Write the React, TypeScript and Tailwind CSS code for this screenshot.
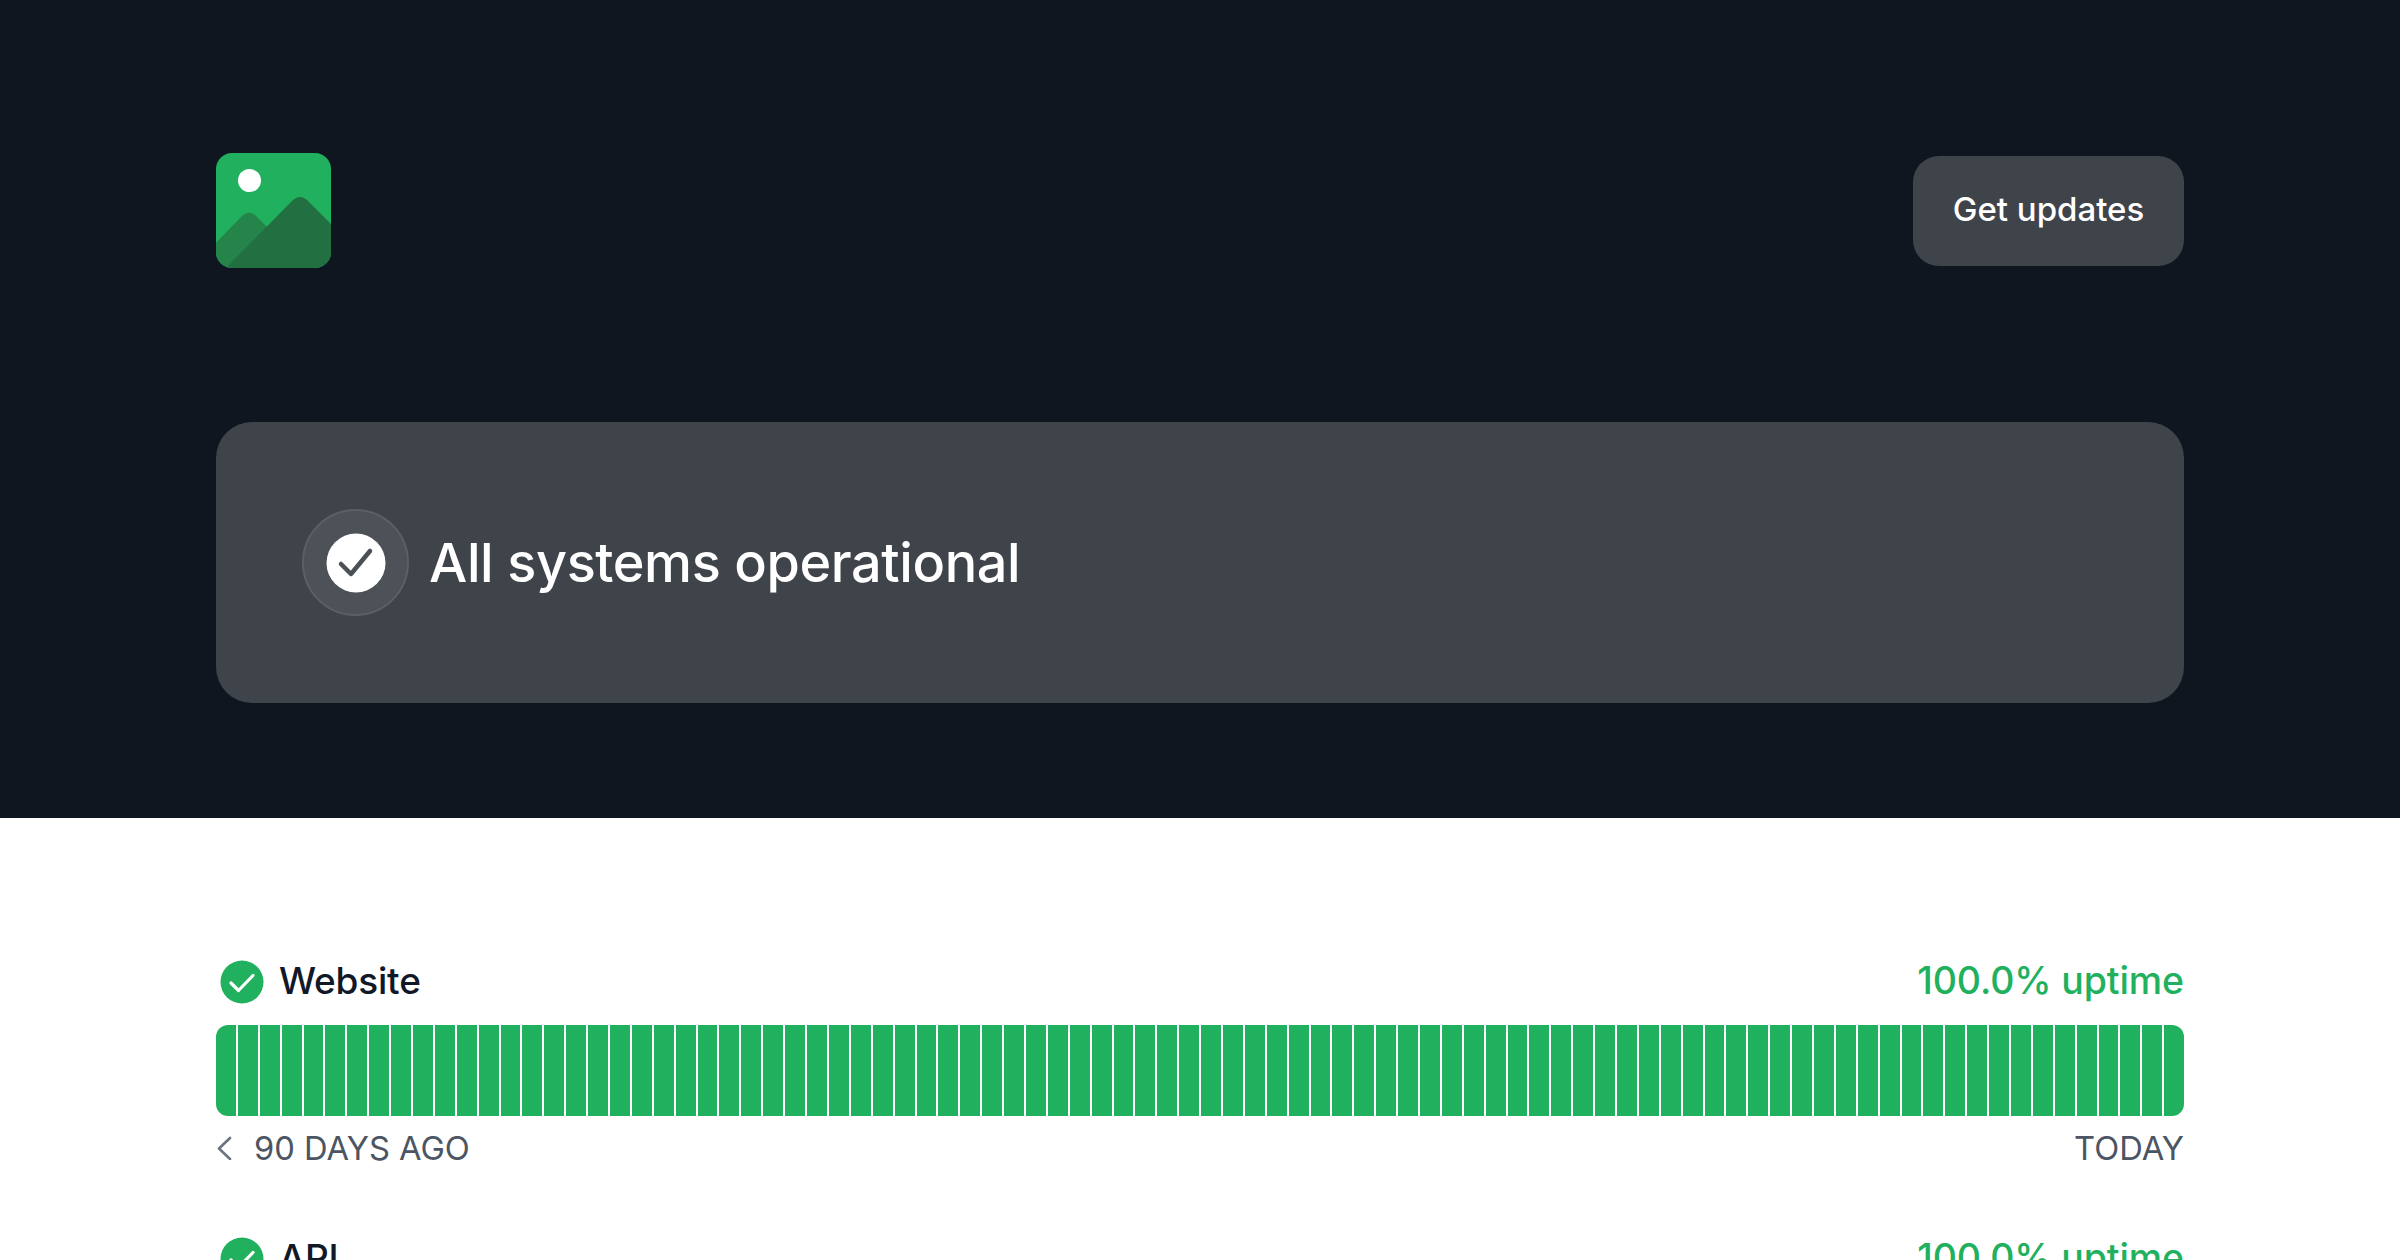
const days = Array.from({ length: 90 }, (_, i) => i);

function Logo() {
  return (
    <svg viewBox="0 0 115 115" className="h-[115px] w-[115px]">
      <defs>
        <clipPath id="logo-clip">
          <rect width="115" height="115" rx="16" />
        </clipPath>
      </defs>
      <g clipPath="url(#logo-clip)">
        <rect width="115" height="115" fill="#21b15e" />
        <circle cx="33.5" cy="27.5" r="11.5" fill="#fff" />
        <path d="M-10 100 L26 63 Q33 56 40 63 L80 103 L40 125 L-10 125 Z" fill="#25844a" />
        <path d="M10 115 L76 48 Q84 40 92 48 L125 81 L125 125 L10 125 Z" fill="#226f42" />
      </g>
    </svg>
  );
}

function CheckBadge() {
  return (
    <svg viewBox="0 0 44 44" className="h-11 w-11 shrink-0">
      <circle cx="22" cy="22" r="21.5" fill="#21b15e" />
      <path d="M11 23 L18.5 30.5 L33 15.5" fill="none" stroke="#fff" strokeWidth="3.2" strokeLinecap="round" strokeLinejoin="round" />
    </svg>
  );
}

function ServiceRow({ name }: { name: string }) {
  return (
    <div className="flex flex-col">
      <div className="flex h-11 items-center justify-between pl-1 leading-none">
        <div className="flex items-center gap-[15px]">
          <CheckBadge />
          <span className="-translate-y-[2px] text-[37px] font-medium tracking-[-0.2px] text-[#111827]">{name}</span>
        </div>
        <span className="-translate-y-px text-[37.5px] font-[450] tracking-[-0.1px] text-[#21b15e]">100.0% uptime</span>
      </div>
      <div className="mt-[21px] flex h-[91px] gap-[2px] overflow-hidden rounded-xl">
        {days.map((d) => (
          <div key={d} className="flex-1 bg-[#20b05e]" />
        ))}
      </div>
      <div className="mt-3 flex items-center justify-between text-[32.7px] leading-[40px] text-[#4b5563]">
        <div className="flex items-center gap-[22px]">
          <svg viewBox="0 0 16 24" className="h-6 w-4" fill="none" stroke="#6b7280" strokeWidth="2.6" strokeLinecap="round" strokeLinejoin="round">
            <path d="M14 2 L3 12.5 L14 23" />
          </svg>
          <span>90 DAYS AGO</span>
        </div>
        <span>TODAY</span>
      </div>
    </div>
  );
}

export default function App() {
  return (
    <div className="h-[1260px] overflow-hidden bg-white font-['Inter',sans-serif]">
      <div className="h-[818px] bg-[#0f1620] px-[216px] pt-[153px]">
        <div className="flex h-[115px] items-center justify-between">
          <Logo />
          <button className="h-[110px] w-[271px] rounded-[26px] bg-[#3f444b] pb-px text-[33px] font-medium text-white">
            Get updates
          </button>
        </div>
        <div className="mt-[154px] flex h-[281px] items-center gap-[20px] rounded-[36px] bg-[#3f444b] px-[86px]">
          <div className="flex h-[107px] w-[107px] items-center justify-center rounded-full border-2 border-[#5b6067] bg-[#4d5258]">
            <svg viewBox="0 0 60 60" className="h-[60px] w-[60px]">
              <circle cx="30" cy="30" r="29.5" fill="#fff" />
              <path d="M15 31 L25 41 L44 18" fill="none" stroke="#4b5056" strokeWidth="4.5" strokeLinecap="round" strokeLinejoin="round" />
            </svg>
          </div>
          <h1 className="text-[54px] font-medium leading-none tracking-[-0.4px] text-white">All systems operational</h1>
        </div>
      </div>
      <div className="flex flex-col gap-[69px] px-[216px] pt-[142px]">
        <ServiceRow name="Website" />
        <ServiceRow name="API" />
      </div>
    </div>
  );
}
